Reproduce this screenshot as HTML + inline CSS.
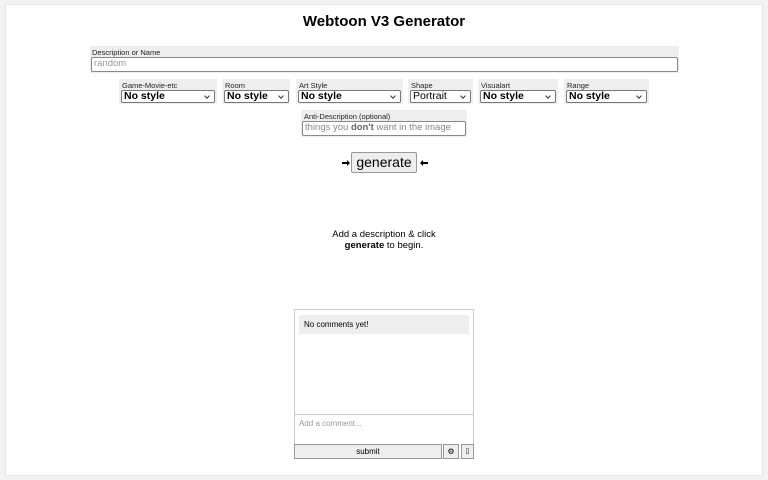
<!DOCTYPE html>
<html><head><meta charset="utf-8"><style>
*{box-sizing:border-box;margin:0;padding:0}
body{width:768px;height:480px;background:#f2f2f2;font-family:"Liberation Sans",sans-serif;position:relative;overflow:hidden;color:#000}
.card{position:absolute;left:5px;top:4px;width:758px;height:472px;background:#fff;border:1px solid #e6e6e6}
.a{position:absolute}
.grp{position:absolute;background:#eee;}
.lbl{position:absolute;font-size:7.5px;color:#222;white-space:nowrap}
.sel{position:absolute;background:#fff;border:1px solid #777;border-radius:2px;font-size:10.5px;font-weight:bold;line-height:11px;padding-left:2px;white-space:nowrap}
.sel.n{font-weight:normal}
.sel:after{content:"";position:absolute;right:5px;top:3px;width:3px;height:3px;border-right:1px solid #333;border-bottom:1px solid #333;transform:rotate(45deg)}
.inp{position:absolute;background:#fff;border:1px solid #888;border-radius:2px;font-size:9.5px;color:#999;line-height:12px;padding-left:2px;white-space:nowrap}
.arr{position:absolute;width:7px;height:2px;background:#000}
</style></head><body>
<div class="card"></div>
<div class="a" style="left:0;width:768px;top:13px;text-align:center;font-size:15px;font-weight:bold">Webtoon V3 Generator</div>

<div class="grp" style="left:90px;top:46px;width:589px;height:27px"></div>
<div class="lbl" style="left:92px;top:48px">Description or Name</div>
<div class="inp" style="left:91px;top:57px;width:587px;height:15px">random</div>

<div class="grp" style="left:119px;top:79px;width:98px;height:25px"></div>
<div class="lbl" style="left:122px;top:81px">Game-Movie-etc</div>
<div class="sel" style="left:121px;top:90px;width:94px;height:13px">No style</div>

<div class="grp" style="left:222px;top:79px;width:68px;height:25px"></div>
<div class="lbl" style="left:225px;top:81px">Room</div>
<div class="sel" style="left:224px;top:90px;width:65px;height:13px">No style</div>

<div class="grp" style="left:296px;top:79px;width:107px;height:25px"></div>
<div class="lbl" style="left:299px;top:81px">Art Style</div>
<div class="sel" style="left:298px;top:90px;width:103px;height:13px">No style</div>

<div class="grp" style="left:408px;top:79px;width:65px;height:25px"></div>
<div class="lbl" style="left:411px;top:81px">Shape</div>
<div class="sel n" style="left:410px;top:90px;width:61px;height:13px">Portrait</div>

<div class="grp" style="left:478px;top:79px;width:80px;height:25px"></div>
<div class="lbl" style="left:481px;top:81px">Visualart</div>
<div class="sel" style="left:480px;top:90px;width:76px;height:13px">No style</div>

<div class="grp" style="left:564px;top:79px;width:85px;height:25px"></div>
<div class="lbl" style="left:567px;top:81px">Range</div>
<div class="sel" style="left:566px;top:90px;width:81px;height:13px">No style</div>

<div class="grp" style="left:301px;top:110px;width:166px;height:27px"></div>
<div class="lbl" style="left:304px;top:112px">Anti-Description (optional)</div>
<div class="inp" style="left:302px;top:121px;width:164px;height:15px;color:#888">things you <b style="color:#666">don't</b> want in the image</div>

<div class="arr" style="left:342px;top:162px"></div>
<div class="a" style="left:347px;top:160px;border-left:3px solid #000;border-top:3px solid transparent;border-bottom:3px solid transparent"></div>
<div class="a" style="left:351px;top:152px;width:66px;height:21px;background:#eee;border:1px solid #999;border-radius:2px;font-size:14px;text-align:center;line-height:19px">generate</div>
<div class="arr" style="left:421px;top:162px"></div>
<div class="a" style="left:420px;top:160px;border-right:3px solid #000;border-top:3px solid transparent;border-bottom:3px solid transparent"></div>

<div class="a" style="left:0;width:768px;top:229px;text-align:center;font-size:9.5px;line-height:11px">Add a description &amp; click<br><b>generate</b> to begin.</div>

<div class="a" style="left:294px;top:309px;width:180px;height:150px;border:1px solid #ccc;background:#fff"></div>
<div class="a" style="left:299px;top:315px;width:170px;height:19px;background:#eee;font-size:8px;line-height:19px;padding-left:5px">No comments yet!</div>
<div class="a" style="left:294px;top:414px;width:180px;height:1px;background:#ccc"></div>
<div class="a" style="left:299px;top:419px;font-size:8px;color:#999">Add a comment...</div>
<div class="a" style="left:294px;top:444px;width:148px;height:15px;background:#eee;border:1px solid #999;font-size:8px;text-align:center;line-height:13px">submit</div>
<div class="a" style="left:443px;top:444px;width:16px;height:15px;background:#eee;border:1px solid #999;font-size:8px;text-align:center;line-height:13px">&#9881;</div>
<div class="a" style="left:461px;top:444px;width:13px;height:15px;background:#eee;border:1px solid #999;font-size:7px;text-align:center;line-height:13px">&#9647;</div>
</body></html>
